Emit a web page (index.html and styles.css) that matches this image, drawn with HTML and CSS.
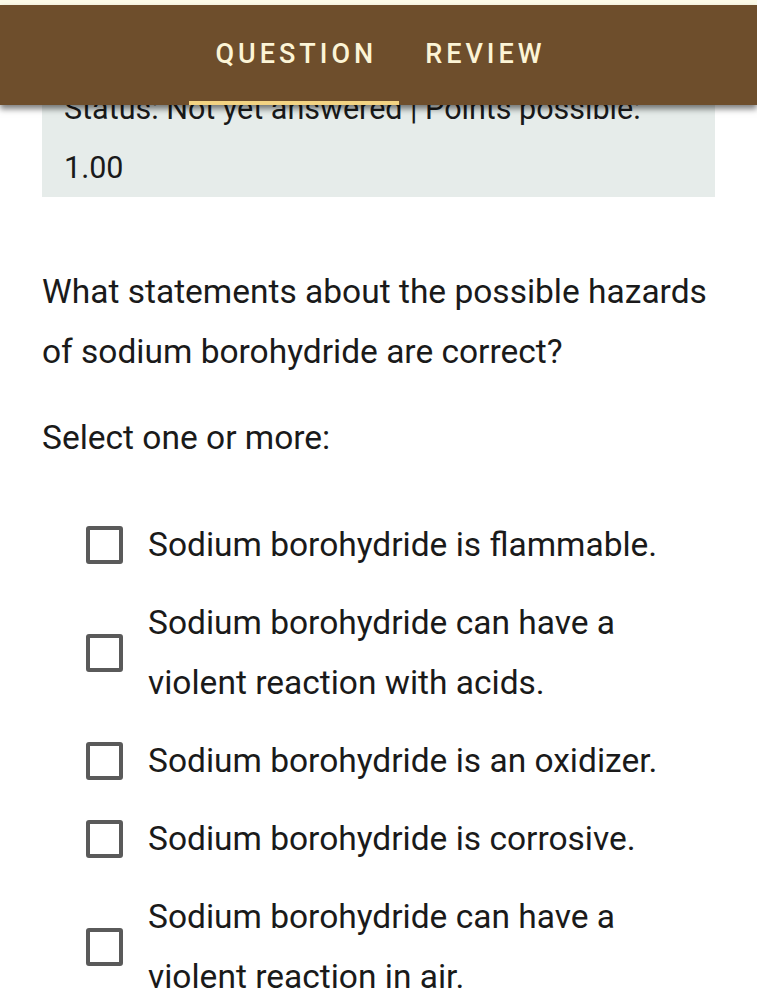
FILE: index.html
```html
<!DOCTYPE html>
<html>
<head>
<meta charset="utf-8">
<link rel="stylesheet" href="styles.css">
</head>
<body>
<div class="topstrip"></div>
<header class="tabs">
  <div class="tab active">QUESTION</div>
  <div class="tab">REVIEW</div>
</header>
<main class="content">
  <div class="status">
    <div class="status-line">Status: Not yet answered | Points possible:</div>
    <div class="status-line">1.00</div>
  </div>
  <p class="question">What statements about the possible hazards of sodium borohydride are correct?</p>
  <p class="prompt">Select one or more:</p>
  <ul class="options">
    <li class="option"><span class="box"></span><span class="label">Sodium borohydride is flammable.</span></li>
    <li class="option"><span class="box"></span><span class="label">Sodium borohydride can have a violent reaction with acids.</span></li>
    <li class="option"><span class="box"></span><span class="label">Sodium borohydride is an oxidizer.</span></li>
    <li class="option"><span class="box"></span><span class="label">Sodium borohydride is corrosive.</span></li>
    <li class="option"><span class="box"></span><span class="label">Sodium borohydride can have a violent reaction in air.</span></li>
  </ul>
</main>
</body>
</html>
```
FILE: styles.css
```css
html, body {
  margin: 0;
  padding: 0;
  background: #ffffff;
  font-family: Roboto, "Noto Sans", sans-serif;
  color: #1a1a1a;
  overflow: hidden;
  height: 994px;
}
.topstrip {
  height: 5px;
  background: #fdfbe9;
}
.tabs {
  position: absolute;
  top: 5px;
  left: 0;
  right: 0;
  height: 100px;
  background: #6e4e2c;
  display: flex;
  justify-content: center;
  box-shadow: 0 4px 6px rgba(0,0,0,0.5);
  z-index: 2;
}
.tab {
  position: relative;
  color: #fcf4d6;
  font-size: 27px;
  letter-spacing: 4px;
  font-weight: 500;
  padding: 0 22px 0 26px;
  line-height: 98px;
}
.tab.active::after {
  content: "";
  position: absolute;
  left: 0;
  right: 0;
  bottom: 0;
  height: 4px;
  background: #f3d383;
}
.content {
  padding: 0 42px;
  margin-top: 74px;
}
.status {
  background: #e6ecea;
  padding: 0 22px;
}
.status-line {
  font-size: 30.5px;
  line-height: 59px;
  height: 59px;
}
.question {
  margin: 65px 0 0;
  font-size: 33.5px;
  line-height: 60px;
}
.prompt {
  margin: 26px 0 0;
  font-size: 33.5px;
  line-height: 60px;
}
.options {
  list-style: none;
  margin: 47px 0 0;
  padding: 0 0 0 44px;
  display: flex;
  flex-direction: column;
  gap: 18px;
}
.option {
  display: flex;
  align-items: center;
  gap: 25px;
}
.box {
  flex: none;
  width: 29px;
  height: 30px;
  border: 4px solid #5a5a5a;
  border-radius: 3px;
}
.label {
  font-size: 33.5px;
  line-height: 60px;
}
```
